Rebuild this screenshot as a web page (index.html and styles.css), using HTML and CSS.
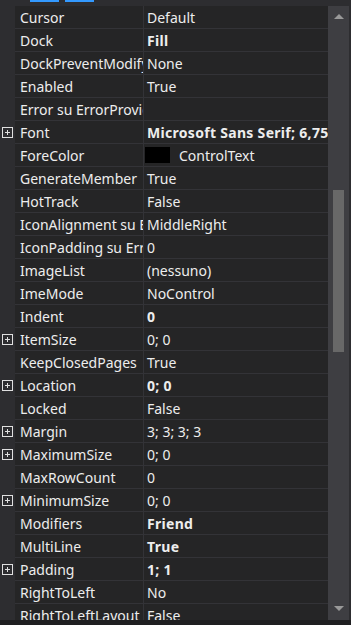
FILE: index.html
```html
<!DOCTYPE html>
<html>
<head>
<meta charset="utf-8">
<link rel="stylesheet" href="styles.css">
</head>
<body>
<div class="top">
  <span class="tab"></span><span class="tab"></span>
</div>
<div class="main">
  <div class="grid">
    <div class="row"><div class="gut"></div><div class="name">Cursor</div><div class="val">Default</div></div>
    <div class="row"><div class="gut"></div><div class="name">Dock</div><div class="val b">Fill</div></div>
    <div class="row"><div class="gut"></div><div class="name">DockPreventModify</div><div class="val">None</div></div>
    <div class="row"><div class="gut"></div><div class="name">Enabled</div><div class="val">True</div></div>
    <div class="row"><div class="gut"></div><div class="name">Error su ErrorProvider1</div><div class="val"></div></div>
    <div class="row"><div class="gut"><span class="plus"></span></div><div class="name">Font</div><div class="val b">Microsoft Sans Serif; 6,75pt</div></div>
    <div class="row"><div class="gut"></div><div class="name">ForeColor</div><div class="val"><span class="swatch"></span>ControlText</div></div>
    <div class="row"><div class="gut"></div><div class="name">GenerateMember</div><div class="val">True</div></div>
    <div class="row"><div class="gut"></div><div class="name">HotTrack</div><div class="val">False</div></div>
    <div class="row"><div class="gut"></div><div class="name">IconAlignment su ErrorProvider1</div><div class="val">MiddleRight</div></div>
    <div class="row"><div class="gut"></div><div class="name">IconPadding su ErrorProvider1</div><div class="val">0</div></div>
    <div class="row"><div class="gut"></div><div class="name">ImageList</div><div class="val">(nessuno)</div></div>
    <div class="row"><div class="gut"></div><div class="name">ImeMode</div><div class="val">NoControl</div></div>
    <div class="row"><div class="gut"></div><div class="name">Indent</div><div class="val b">0</div></div>
    <div class="row"><div class="gut"><span class="plus"></span></div><div class="name">ItemSize</div><div class="val">0; 0</div></div>
    <div class="row"><div class="gut"></div><div class="name">KeepClosedPages</div><div class="val">True</div></div>
    <div class="row"><div class="gut"><span class="plus"></span></div><div class="name">Location</div><div class="val b">0; 0</div></div>
    <div class="row"><div class="gut"></div><div class="name">Locked</div><div class="val">False</div></div>
    <div class="row"><div class="gut"><span class="plus"></span></div><div class="name">Margin</div><div class="val">3; 3; 3; 3</div></div>
    <div class="row"><div class="gut"><span class="plus"></span></div><div class="name">MaximumSize</div><div class="val">0; 0</div></div>
    <div class="row"><div class="gut"></div><div class="name">MaxRowCount</div><div class="val">0</div></div>
    <div class="row"><div class="gut"><span class="plus"></span></div><div class="name">MinimumSize</div><div class="val">0; 0</div></div>
    <div class="row"><div class="gut"></div><div class="name">Modifiers</div><div class="val b">Friend</div></div>
    <div class="row"><div class="gut"></div><div class="name">MultiLine</div><div class="val b">True</div></div>
    <div class="row"><div class="gut"><span class="plus"></span></div><div class="name">Padding</div><div class="val b">1; 1</div></div>
    <div class="row"><div class="gut"></div><div class="name">RightToLeft</div><div class="val">No</div></div>
    <div class="row"><div class="gut"></div><div class="name">RightToLeftLayout</div><div class="val">False</div></div>
  </div>
  <div class="scroll">
    <div class="arrow up"></div>
    <div class="track"><div class="thumb"></div></div>
    <div class="arrow down"></div>
  </div>
  <div class="edge"></div>
</div>
<div class="bottom"></div>
</body>
</html>
```

FILE: styles.css
```css
* { box-sizing: border-box; }
html, body {
  margin: 0;
  padding: 0;
  background: #2d2d30;
  width: 351px;
  height: 625px;
  overflow: hidden;
  font-family: "Noto Sans", "Open Sans", sans-serif;
  font-size: 14px;
  color: #ededed;
}
.top {
  height: 6px;
  display: flex;
  gap: 6px;
  padding-left: 30px;
  background: #2d2d30;
}
.tab {
  width: 29px;
  height: 2px;
  background: #3399ff;
}
.main {
  display: flex;
  height: 614px;
}
.grid {
  flex: 1;
  overflow: hidden;
  background: #252526;
}
.row {
  display: grid;
  grid-template-columns: 15px 129px 1fr;
  height: 23px;
}
.gut {
  background: #2d2d30;
  display: flex;
  align-items: center;
  justify-content: center;
}
.name, .val {
  border-bottom: 1px solid #333337;
  white-space: nowrap;
  overflow: hidden;
  line-height: 23px;
}
.name {
  padding-left: 5px;
  border-right: 1px solid #333337;
}
.val {
  padding-left: 3px;
  display: flex;
  align-items: center;
}
.b { font-weight: 700; letter-spacing: 0.3px; }
.plus {
  width: 11px;
  height: 11px;
  border: 1px solid #e0e0e0;
  position: relative;
}
.plus::before, .plus::after {
  content: "";
  position: absolute;
  background: #e0e0e0;
}
.plus::before { left: 2px; top: 4px; width: 5px; height: 1px; }
.plus::after { left: 4px; top: 2px; width: 1px; height: 5px; }
.swatch {
  width: 25px;
  height: 16px;
  background: #000;
  margin-left: -2px;
  margin-right: 9px;
}
.scroll {
  width: 21px;
  background: #3e3e42;
  display: flex;
  flex-direction: column;
  align-items: center;
}
.edge {
  width: 2px;
  background: #2d2d30;
}
.arrow {
  width: 0;
  height: 0;
  border-left: 5px solid transparent;
  border-right: 5px solid transparent;
}
.arrow.up {
  margin-top: 8px;
  border-bottom: 5px solid #999999;
}
.arrow.down {
  margin-bottom: 9px;
  border-top: 5px solid #999999;
}
.track {
  flex: 1;
  width: 100%;
  padding-top: 171px;
  display: flex;
  justify-content: center;
}
.thumb {
  width: 11px;
  height: 162px;
  background: #686868;
}
.bottom {
  height: 5px;
  background: #1f1f21;
}
```
